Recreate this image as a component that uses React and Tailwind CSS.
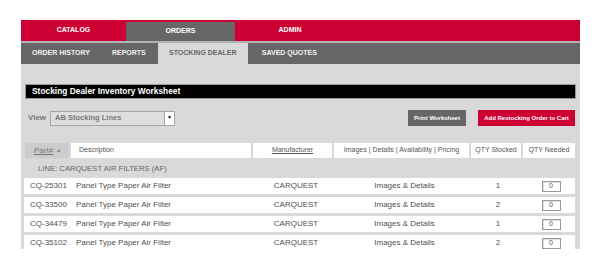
const topNav = [
  { label: "CATALOG", w: "w-[105px]", active: false },
  { label: "ORDERS", w: "w-[109px]", active: true },
  { label: "ADMIN", w: "w-[110px]", active: false },
];

const subNav = [
  { label: "ORDER HISTORY", active: false },
  { label: "REPORTS", active: false },
  { label: "STOCKING DEALER", active: true },
  { label: "SAVED QUOTES", active: false },
];

const rows = [
  { part: "CQ-25301", stocked: 1 },
  { part: "CQ-33500", stocked: 2 },
  { part: "CQ-34479", stocked: 1 },
  { part: "CQ-35102", stocked: 2 },
];

const App = () => {
  return (
    <div className="w-[600px] h-[270px] bg-white pt-[20px] pl-[21px] overflow-hidden font-['Liberation_Sans',Arial,sans-serif]">
      <div className="w-[559px]">
        {/* main nav */}
        <div className="flex h-[21px] bg-[#cc0033]">
          {topNav.map((item) => (
            <div
              key={item.label}
              className={`${item.w} flex items-center justify-center text-[7px] font-bold text-white ${
                item.active ? "bg-[#666666] mt-[2px]" : ""
              }`}
            >
              {item.label}
            </div>
          ))}
        </div>
        <div className="h-[2px] bg-[#b3b3b3]" />

        {/* sub nav */}
        <div className="flex h-[21px] bg-[#666666]">
          {subNav.map((item) => (
            <div
              key={item.label}
              className={`flex items-center px-[11px] text-[7px] font-bold ${
                item.active
                  ? "bg-[#d9d9d9] text-[#666666] ml-[1px] mr-[3px] w-[90px] justify-center"
                  : "text-[#f2f2f2]"
              }`}
            >
              {item.label}
            </div>
          ))}
        </div>

        {/* content */}
        <div className="h-[185px] overflow-hidden bg-[#d9d9d9] px-[4px] pt-[20px]">
          <div className="flex h-[15px] items-center border border-[#9a9a9a] bg-black pl-[6px] text-[8.4px] font-bold text-white">
            Stocking Dealer Inventory Worksheet
          </div>

          <div className="mt-[11px] flex h-[16px] items-center justify-between pl-[3px] pr-[1px]">
            <div className="flex items-center">
              <span className="text-[8px] font-bold text-[#777777]">View</span>
              <div className="ml-[4px] flex h-[15px] w-[125px] items-stretch border border-[#a6a6a6] bg-[#dedede]">
                <span className="flex flex-1 items-center pl-[4px] text-[7.5px] font-bold text-[#777777]">
                  AB Stocking Lines
                </span>
                <span className="flex w-[10px] items-center justify-center border-l border-[#a6a6a6] bg-white text-[5px] text-black">
                  ▼
                </span>
              </div>
            </div>
            <div className="flex items-center gap-[12px]">
              <button className="flex h-[16px] w-[58px] items-center justify-center bg-[#666666] text-[6px] font-bold text-white">
                Print Worksheet
              </button>
              <button className="flex h-[16px] w-[97px] items-center justify-center bg-[#cc0033] text-[6px] font-bold text-white">
                Add Restocking Order to Cart
              </button>
            </div>
          </div>

          {/* table header */}
          <div className="mt-[17px] grid h-[15px] grid-cols-[44px_180px_79px_135px_50px_52px] gap-x-[2px] text-[7px] text-[#555555]">
            <div className="flex items-center bg-[#cccccc] pl-[9px] text-[8px] text-[#777777]">
              <span className="underline">Part#</span>
              <span className="ml-[3px] text-[5px]">▲</span>
            </div>
            <div className="flex items-center bg-white pl-[8px]">Description</div>
            <div className="flex items-center justify-center bg-white underline">Manufacturer</div>
            <div className="flex items-center justify-center bg-white">
              Images | Details | Availability | Pricing
            </div>
            <div className="flex items-center justify-center bg-white">QTY Stocked</div>
            <div className="flex items-center justify-center bg-white">QTY Needed</div>
          </div>

          <div className="mt-[2px] flex h-[18px] items-center pl-[13px] text-[7.7px] text-[#666666]">
            LINE: CARQUEST AIR FILTERS (AF)
          </div>

          {rows.map((row) => (
            <div
              key={row.part}
              className="-ml-[1px] mb-[3px] grid h-[16px] w-[551px] grid-cols-[52px_176px_88px_129px_58px_48px] items-center bg-white text-[8px] text-[#505050]"
            >
              <span className="pl-[6px]">{row.part}</span>
              <span>Panel Type Paper Air Filter</span>
              <span className="text-center">CARQUEST</span>
              <span className="text-center">Images &amp; Details</span>
              <span className="text-center">{row.stocked}</span>
              <span className="flex justify-center">
                <span className="flex h-[11px] w-[19px] items-center justify-center border border-[#999999] bg-white text-[7px] text-[#555555] shadow-[inset_1px_1px_0_#e0e0e0]">
                  0
                </span>
              </span>
            </div>
          ))}
        </div>
      </div>
    </div>
  );
};

export default App;
